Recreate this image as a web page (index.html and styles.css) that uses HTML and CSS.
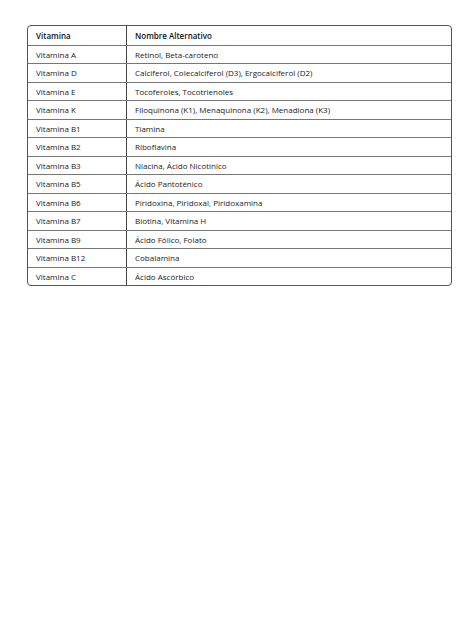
FILE: index.html
```html
<!DOCTYPE html>
<html lang="es">
<head>
<meta charset="utf-8">
<link rel="stylesheet" href="styles.css">
</head>
<body>
<div class="table">
  <div class="row head"><div class="c1">Vitamina</div><div class="c2">Nombre Alternativo</div></div>
  <div class="row"><div class="c1">Vitamina A</div><div class="c2">Retinol, Beta-caroteno</div></div>
  <div class="row"><div class="c1">Vitamina D</div><div class="c2">Calciferol, Colecalciferol (D3), Ergocalciferol (D2)</div></div>
  <div class="row"><div class="c1">Vitamina E</div><div class="c2">Tocoferoles, Tocotrienoles</div></div>
  <div class="row"><div class="c1">Vitamina K</div><div class="c2">Filoquinona (K1), Menaquinona (K2), Menadiona (K3)</div></div>
  <div class="row"><div class="c1">Vitamina B1</div><div class="c2">Tiamina</div></div>
  <div class="row"><div class="c1">Vitamina B2</div><div class="c2">Riboflavina</div></div>
  <div class="row"><div class="c1">Vitamina B3</div><div class="c2">Niacina, Ácido Nicotínico</div></div>
  <div class="row"><div class="c1">Vitamina B5</div><div class="c2">Ácido Pantoténico</div></div>
  <div class="row"><div class="c1">Vitamina B6</div><div class="c2">Piridoxina, Piridoxal, Piridoxamina</div></div>
  <div class="row"><div class="c1">Vitamina B7</div><div class="c2">Biotina, Vitamina H</div></div>
  <div class="row"><div class="c1">Vitamina B9</div><div class="c2">Ácido Fólico, Folato</div></div>
  <div class="row"><div class="c1">Vitamina B12</div><div class="c2">Cobalamina</div></div>
  <div class="row"><div class="c1">Vitamina C</div><div class="c2">Ácido Ascórbico</div></div>
</div>
</body>
</html>
```
FILE: styles.css
```css
html, body {
  margin: 0;
  background: #fff;
}
body {
  padding: 25px 22px 0 27px;
  font-family: "Open Sans", "Noto Sans", sans-serif;
  font-size: 8px;
  color: #222;
}
.table {
  width: 425px;
  border: 1px solid #555;
  border-radius: 4px;
  box-sizing: border-box;
  overflow: hidden;
}
.row {
  display: grid;
  grid-template-columns: 99px 1fr;
  height: 18.5px;
  border-top: 1px solid #777;
  box-sizing: border-box;
}
.row.head {
  border-top: none;
  height: 18.5px;
  font-weight: 600;
  color: #111;
}
.c1, .c2 {
  display: flex;
  align-items: center;
  padding-left: 8px;
}
.c1 {
  border-right: 1px solid #444;
}
```
